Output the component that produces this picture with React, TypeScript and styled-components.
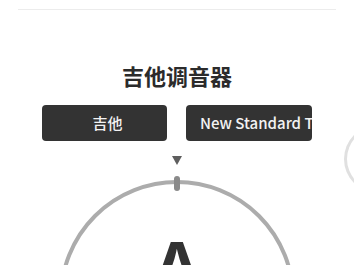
import React from 'react';
import styled, { createGlobalStyle } from 'styled-components';

const GlobalStyle = createGlobalStyle`
  html, body {
    margin: 0;
    padding: 0;
    background: #fff;
    overflow: hidden;
  }
  body {
    font-family: "Noto Sans CJK SC", "Noto Sans", sans-serif;
    color: #333;
  }
`;

const Page = styled.div`
  position: relative;
  width: 354px;
  height: 265px;
  overflow: hidden;
  display: flex;
  flex-direction: column;
  align-items: center;

  & > * {
    flex-shrink: 0;
  }
`;

const TopBar = styled.div`
  align-self: stretch;
  height: 9px;
  margin: 0 18px;
  border-bottom: 1px solid #ececec;
`;

const Title = styled.h1`
  margin: 49px 0 0;
  font-size: 22px;
  line-height: 32px;
  font-weight: 700;
  color: #2b2b2b;
`;

const Controls = styled.div`
  display: flex;
  gap: 19px;
  margin-top: 14px;
`;

const Picker = styled.div<{ $width: number; $pl: number; $pr: number; $center?: boolean }>`
  box-sizing: border-box;
  width: ${(p) => p.$width}px;
  height: 36px;
  padding: 0 ${(p) => p.$pr}px 0 ${(p) => p.$pl}px;
  background: #333;
  border-radius: 4px;
  color: #f2f2f2;
  font-size: 15px;
  font-weight: 500;
  line-height: 36px;
  white-space: nowrap;
  overflow: hidden;
  text-align: ${(p) => (p.$center ? 'center' : 'left')};
`;

const Pointer = styled.div`
  width: 0;
  height: 0;
  margin-top: 15px;
  border-left: 5px solid transparent;
  border-right: 5px solid transparent;
  border-top: 9px solid #5e5e5e;
`;

const Dial = styled.div`
  position: relative;
  box-sizing: border-box;
  width: 236px;
  height: 236px;
  margin-top: 15px;
  border: 4px solid #acacac;
  border-radius: 50%;
  display: flex;
  justify-content: center;
  padding-top: 48px;
`;

const Needle = styled.div`
  position: absolute;
  top: -8px;
  left: 50%;
  width: 6px;
  height: 15px;
  margin-left: -3px;
  border-radius: 3px;
  background: #8a8a8a;
`;

const Note = styled.div`
  font-size: 64px;
  line-height: 1;
  font-weight: 700;
  color: #333;
  font-family: "Noto Sans", sans-serif;
`;

const SideRing = styled.div`
  position: absolute;
  top: 125px;
  left: 344px;
  width: 68px;
  height: 68px;
  box-sizing: border-box;
  border-radius: 50%;
  border: 3px solid transparent;
  border-left-color: #e0e0e0;
`;

export default function App() {
  return (
    <>
      <GlobalStyle />
      <Page>
        <TopBar />
        <Title>吉他调音器</Title>
        <Controls>
          <Picker $width={125} $pl={20} $pr={14} $center>
            吉他
          </Picker>
          <Picker $width={126} $pl={14} $pr={9}>
            New Standard Tuning
          </Picker>
        </Controls>
        <Pointer />
        <Dial>
          <Needle />
          <Note>A</Note>
        </Dial>
        <SideRing />
      </Page>
    </>
  );
}
